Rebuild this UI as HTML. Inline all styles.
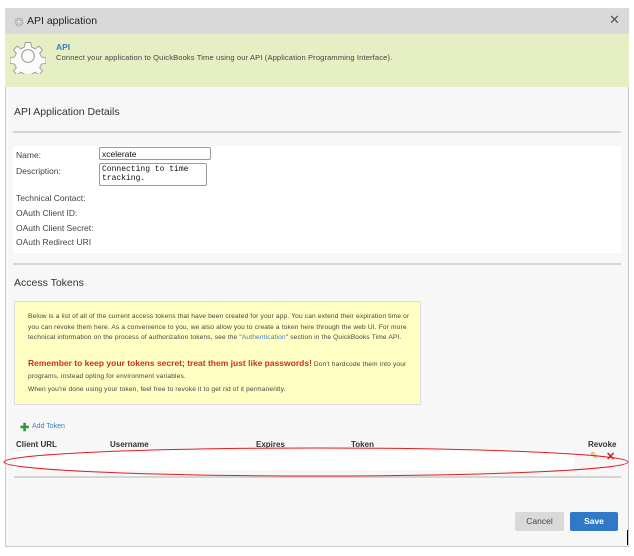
<!DOCTYPE html>
<html><head><style>
*{margin:0;padding:0;box-sizing:border-box}
body{width:634px;height:556px;background:#fff;font-family:"Liberation Sans",sans-serif;position:relative;overflow:hidden;color:#333}
.a{position:absolute}
.lbl{font-size:8.5px;color:#444}
.th{font-size:8px;color:#333;font-weight:bold}
</style></head><body>
<div class="a" style="left:5px;top:8px;width:624px;height:539px;background:#f7f7f7;border:1px solid #c8c8c8"></div>
<div class="a" style="left:5px;top:8px;width:624px;height:26px;background:#d9d9d9"></div>
<svg class="a" style="left:14px;top:17px" width="10" height="10" viewBox="0 0 10 10"><circle cx="5" cy="5" r="3.6" fill="none" stroke="#aaa" stroke-width="2" stroke-dasharray="1.5 1"/><circle cx="5" cy="5" r="1.6" fill="#eee" stroke="#aaa" stroke-width=".6"/></svg>
<div class="a" style="left:27px;top:15px;font-size:10.5px;color:#222">API application</div>
<div class="a" style="left:609px;top:12px;font-size:13px;color:#555">✕</div>
<div class="a" style="left:5px;top:34px;width:624px;height:53px;background:#e6eec4"></div>
<svg class="a" style="left:10px;top:38px" width="36" height="36" viewBox="0 0 34 34"><g fill="#fafafa" stroke="#999" stroke-width="1"><path d="M14 2h6l1 5 4 2 4-3 4 4-3 4 2 4 5 1v6l-5 1-2 4 3 4-4 4-4-3-4 2-1 5h-6l-1-5-4-2-4 3-4-4 3-4-2-4-5-1v-6l5-1 2-4-3-4 4-4 4 3 4-2z" transform="scale(.85) translate(3 3)"/><circle cx="17" cy="17" r="6"/></g></svg>
<div class="a" style="left:56px;top:42px;font-size:8.5px;font-weight:bold;color:#3a7dc8">API</div>
<div class="a" style="left:56px;top:53px;font-size:7.5px;color:#444;letter-spacing:.15px">Connect your application to QuickBooks Time using our API (Application Programming Interface).</div>
<div class="a" style="left:14px;top:106px;font-size:10.5px;color:#333">API Application Details</div>
<div class="a" style="left:13px;top:131px;width:608px;height:2px;background:#d5d5d5"></div>
<div class="a" style="left:13px;top:146px;width:608px;height:107px;background:#fff"></div>
<div class="a lbl" style="left:16px;top:150px">Name:</div>
<div class="a" style="left:99px;top:147px;width:112px;height:13px;border:1px solid #999;border-radius:2px;font-size:8.5px;padding:1px 2px;color:#111">xcelerate</div>
<div class="a lbl" style="left:16px;top:166px">Description:</div>
<div class="a" style="left:99px;top:163px;width:108px;height:23px;border:1px solid #999;border-radius:2px;font:8px/9px 'Liberation Mono',monospace;padding:1px 2px;color:#111">Connecting to time tracking.</div>
<div class="a lbl" style="left:16px;top:193px">Technical Contact:</div>
<div class="a lbl" style="left:16px;top:208px">OAuth Client ID:</div>
<div class="a lbl" style="left:16px;top:223px">OAuth Client Secret:</div>
<div class="a lbl" style="left:16px;top:237px">OAuth Redirect URI</div>
<div class="a" style="left:13px;top:263px;width:608px;height:2px;background:#d5d5d5"></div>
<div class="a" style="left:14px;top:277px;font-size:10.5px;color:#333">Access Tokens</div>
<div class="a" style="left:14px;top:301px;width:407px;height:104px;background:#ffffc3;border:1px solid #ddd"></div>
<div class="a" style="left:28px;top:312px;width:382px;font-size:6.6px;line-height:10.5px;color:#444;letter-spacing:.15px">Below is a list of all of the current access tokens that have been created for your app. You can extend their expiration time or you can revoke them here. As a convenience to you, we also allow you to create a token here through the web UI. For more technical information on the process of authorization tokens, see the "<span style="color:#3a7dc8">Authentication</span>" section in the QuickBooks Time API.</div>
<div class="a" style="left:28px;top:357px;width:382px;font-size:6.6px;line-height:12px;color:#444;letter-spacing:.15px"><b style="color:#c83030;font-size:8.5px;letter-spacing:0">Remember to keep your tokens secret; treat them just like passwords!</b> Don't hardcode them into your programs, instead opting for environment variables.</div>
<div class="a" style="left:28px;top:386px;font-size:6.6px;color:#444;letter-spacing:.15px">When you're done using your token, feel free to revoke it to get rid of it permanently.</div>
<div class="a" style="left:20px;top:421px;font-size:11px;font-weight:bold;color:#2e9a3a">✚</div>
<div class="a" style="left:32px;top:423px;font-size:7px;color:#3a7dc8">Add Token</div>
<div class="a th" style="left:16px;top:440px">Client URL</div>
<div class="a th" style="left:110px;top:440px">Username</div>
<div class="a th" style="left:256px;top:440px">Expires</div>
<div class="a th" style="left:351px;top:440px">Token</div>
<div class="a th" style="left:588px;top:440px">Revoke</div>
<div class="a" style="left:14px;top:451px;width:560px;height:19px;background:#fff"></div>
<div class="a" style="left:590px;top:451px;font-size:10px;color:#e89a20">✎</div>
<div class="a" style="left:606px;top:450px;font-size:11px;font-weight:bold;color:#c82020">✕</div>
<div class="a" style="left:14px;top:476px;width:607px;height:2px;background:#d5d5d5"></div>
<svg class="a" style="left:0;top:440px" width="634" height="44"><ellipse cx="316" cy="22" rx="312" ry="14" fill="none" stroke="#e02020" stroke-width="1"/></svg>
<div class="a" style="left:515px;top:512px;width:49px;height:19px;background:#d9d9d9;border-radius:2px;font-size:8.5px;color:#444;text-align:center;line-height:19px">Cancel</div>
<div class="a" style="left:570px;top:512px;width:48px;height:19px;background:#2f79c8;border-radius:2px;font-size:8.5px;font-weight:bold;color:#fff;text-align:center;line-height:19px">Save</div>
<div class="a" style="left:627px;top:530px;width:1px;height:15px;background:#000"></div>
</body></html>
